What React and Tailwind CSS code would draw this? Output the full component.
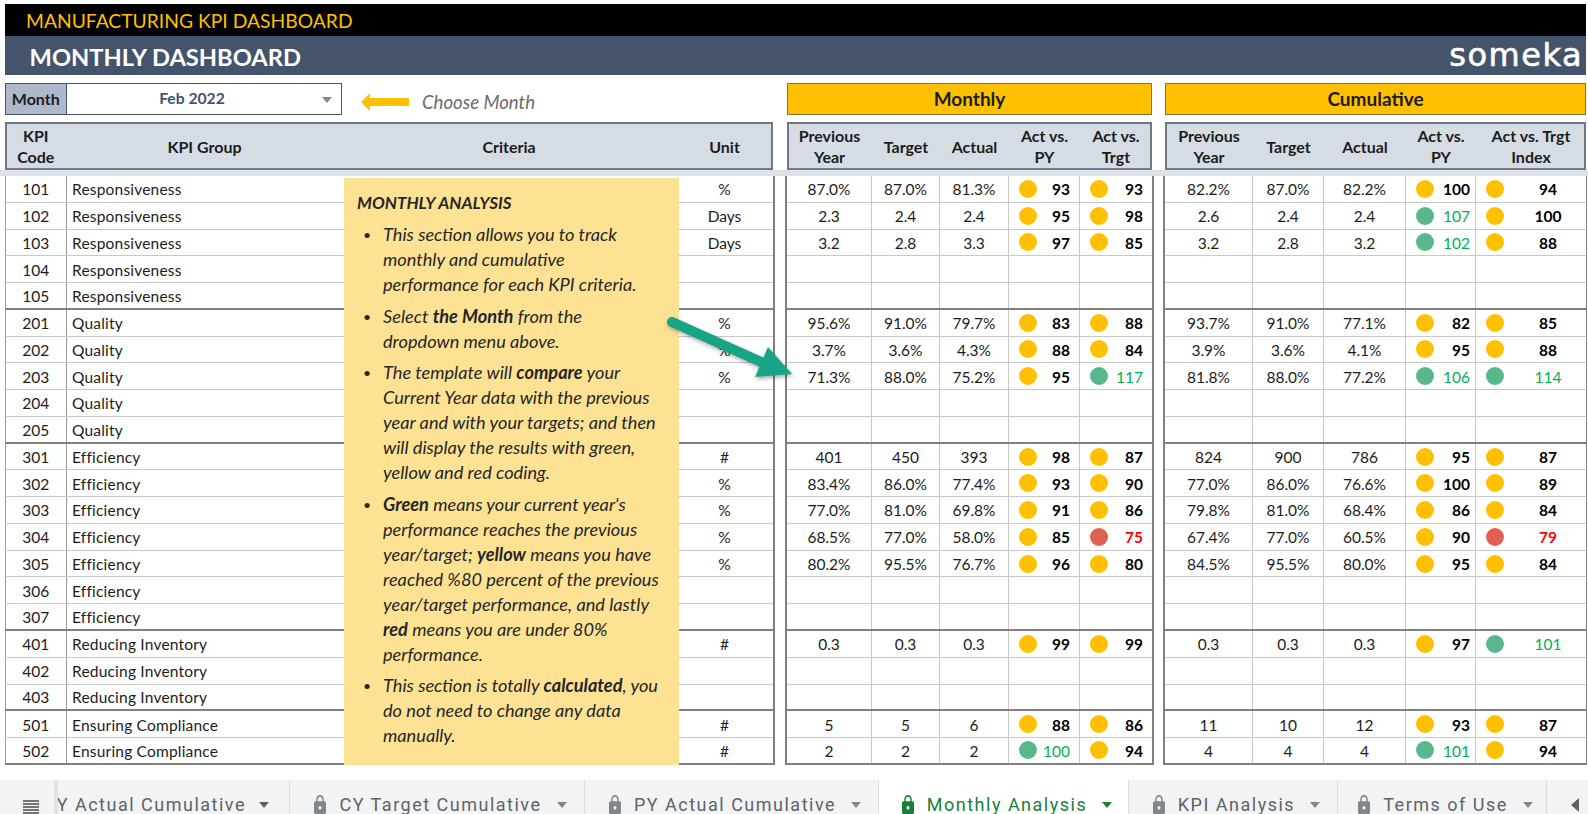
import React from 'react'

const sans = { fontFamily: 'Lato, "Liberation Sans", sans-serif' }

// u = unit, m = monthly [py, target, actual, score, score], c = cumulative; score = dot colour letter + value
const kpiRows = [
  { code: 101, group: 'Responsiveness', u: '%', m: ['87.0%', '87.0%', '81.3%', 'y93', 'y93'], c: ['82.2%', '87.0%', '82.2%', 'y100', 'y94'] },
  { code: 102, group: 'Responsiveness', u: 'Days', m: ['2.3', '2.4', '2.4', 'y95', 'y98'], c: ['2.6', '2.4', '2.4', 'g107', 'y100'] },
  { code: 103, group: 'Responsiveness', u: 'Days', m: ['3.2', '2.8', '3.3', 'y97', 'y85'], c: ['3.2', '2.8', '3.2', 'g102', 'y88'] },
  { code: 104, group: 'Responsiveness' },
  { code: 105, group: 'Responsiveness', end: true },
  { code: 201, group: 'Quality', u: '%', m: ['95.6%', '91.0%', '79.7%', 'y83', 'y88'], c: ['93.7%', '91.0%', '77.1%', 'y82', 'y85'] },
  { code: 202, group: 'Quality', u: '%', m: ['3.7%', '3.6%', '4.3%', 'y88', 'y84'], c: ['3.9%', '3.6%', '4.1%', 'y95', 'y88'] },
  { code: 203, group: 'Quality', u: '%', m: ['71.3%', '88.0%', '75.2%', 'y95', 'g117'], c: ['81.8%', '88.0%', '77.2%', 'g106', 'g114'] },
  { code: 204, group: 'Quality' },
  { code: 205, group: 'Quality', end: true },
  { code: 301, group: 'Efficiency', u: '#', m: ['401', '450', '393', 'y98', 'y87'], c: ['824', '900', '786', 'y95', 'y87'] },
  { code: 302, group: 'Efficiency', u: '%', m: ['83.4%', '86.0%', '77.4%', 'y93', 'y90'], c: ['77.0%', '86.0%', '76.6%', 'y100', 'y89'] },
  { code: 303, group: 'Efficiency', u: '%', m: ['77.0%', '81.0%', '69.8%', 'y91', 'y86'], c: ['79.8%', '81.0%', '68.4%', 'y86', 'y84'] },
  { code: 304, group: 'Efficiency', u: '%', m: ['68.5%', '77.0%', '58.0%', 'y85', 'r75'], c: ['67.4%', '77.0%', '60.5%', 'y90', 'r79'] },
  { code: 305, group: 'Efficiency', u: '%', m: ['80.2%', '95.5%', '76.7%', 'y96', 'y80'], c: ['84.5%', '95.5%', '80.0%', 'y95', 'y84'] },
  { code: 306, group: 'Efficiency' },
  { code: 307, group: 'Efficiency', end: true },
  { code: 401, group: 'Reducing Inventory', u: '#', m: ['0.3', '0.3', '0.3', 'y99', 'y99'], c: ['0.3', '0.3', '0.3', 'y97', 'g101'] },
  { code: 402, group: 'Reducing Inventory' },
  { code: 403, group: 'Reducing Inventory', end: true },
  { code: 501, group: 'Ensuring Compliance', u: '#', m: ['5', '5', '6', 'y88', 'y86'], c: ['11', '10', '12', 'y93', 'y87'] },
  { code: 502, group: 'Ensuring Compliance', u: '#', m: ['2', '2', '2', 'g100', 'y94'], c: ['4', '4', '4', 'g101', 'y94'], end: true },
]

const dotColor = { y: 'bg-[#ffc000]', g: 'bg-[#58b88c]', r: 'bg-[#e2604f]' }
const numColor = {
  y: 'text-black font-bold',
  g: 'text-[#00b050]',
  r: 'text-[#ff0000] font-bold',
}

const monthlyW = ['w-[85px]', 'w-[68px]', 'w-[69px]', 'w-[71px]', 'w-[72px]']
const cumulW = ['w-[88px]', 'w-[71px]', 'w-[82px]', 'w-[70px]', 'w-[110px]']
const monthlyAlign = ['', '', '', 'text-right pr-[9px]', 'text-right pr-[9px]']
const cumulAlign = ['', '', '', 'text-right pr-[5px]', 'text-center pl-[6px]']

const ScoreCell = ({ value, width, last, align }) => (
  <div className={`${width} h-full flex items-center pl-[10px] ${last ? '' : 'border-r border-[#c8c8c8]'}`}>
    {value && <span className={`w-[18px] h-[18px] rounded-full shrink-0 ${dotColor[value[0]]}`} />}
    {value && <span className={`flex-1 pt-[2px] ${align} ${numColor[value[0]]}`}>{value.slice(1)}</span>}
  </div>
)

const Segment = ({ values = [], widths, aligns }) => (
  <div className="flex h-full">
    {widths.map((w, i) =>
      i < 3 ? (
        <div key={i} className={`${w} h-full flex items-center justify-center pt-[2px] border-r border-[#c8c8c8]`}>
          {values[i]}
        </div>
      ) : (
        <ScoreCell key={i} value={values[i]} width={w} last={i === 4} align={aligns[i]} />
      )
    )}
  </div>
)

const Row = ({ row }) => (
  <div className="flex h-[26.77px] text-[15.5px] text-[#1c1c1c]">
    <div className={`flex flex-none w-[768.5px] border-b ${row.end ? 'border-b-2 border-[#808080]' : 'border-[#c8c8c8]'}`}>
      <div className="w-[62.5px] flex items-center justify-center pt-[2px] border-l border-r border-[#9a9a9a]">{row.code}</div>
      <div className="w-[275px] flex items-center pt-[2px] pl-[5px] tracking-[0.2px]">{row.group}</div>
      <div className="w-[334px]" />
      <div className="w-[97px] flex items-center justify-center pt-[2px]">{row.u}</div>
    </div>
    <div className="w-[14px] flex-none border-x-2 border-[#808080]" />
    <div className={`flex-none border-b ${row.end ? 'border-b-2 border-[#808080]' : 'border-[#c8c8c8]'}`}>
      <Segment values={row.m} widths={monthlyW} aligns={monthlyAlign} />
    </div>
    <div className="w-[13px] flex-none border-x-2 border-[#808080]" />
    <div className={`flex-none border-b border-r border-r-[#808080] ${row.end ? 'border-b-2 border-b-[#808080]' : 'border-b-[#c8c8c8]'}`}>
      <Segment values={row.c} widths={cumulW} aligns={cumulAlign} />
    </div>
  </div>
)

const HeadCell = ({ width, children }) => (
  <div className={`${width} flex items-center justify-center text-center leading-[21px]`}>{children}</div>
)

const Bullet = ({ children, className = '' }) => (
  <div className={`flex ${className}`}>
    <span className="w-[26px] pl-[6px] not-italic text-[14px]">•</span>
    <p>{children}</p>
  </div>
)

const LockIcon = ({ className }) => (
  <svg viewBox="0 0 24 24" className={className} fill="currentColor" preserveAspectRatio="none">
    <path d="M18 8h-1V6c0-2.76-2.24-5-5-5S7 3.24 7 6v2H6c-1.1 0-2 .9-2 2v10c0 1.1.9 2 2 2h12c1.1 0 2-.9 2-2V10c0-1.1-.9-2-2-2zm-6 9c-1.1 0-2-.9-2-2s.9-2 2-2 2 .9 2 2-.9 2-2 2zm3.1-9H8.9V6c0-1.71 1.39-3.1 3.1-3.1 1.71 0 3.1 1.39 3.1 3.1v2z" />
  </svg>
)

const Caret = ({ className = 'text-[#80868b]' }) => (
  <svg viewBox="0 0 10 6" className={`w-[10px] h-[6px] ${className}`} fill="currentColor">
    <path d="M0 0h10L5 6z" />
  </svg>
)

const Tab = ({ label, width, active }) => (
  <div
    className={`${width} flex-none flex items-center justify-center gap-[10px] pt-[16px] pl-[4px] border-r border-[#dadce0] ${
      active ? 'bg-white text-[#188038]' : 'text-[#5f6368]'
    }`}
  >
    <LockIcon className={`w-[18px] h-[22px] flex-none ${active ? 'text-[#188038]' : 'text-[#80868b]'}`} />
    <span className="tracking-[1.5px] whitespace-nowrap">{label}</span>
    <Caret className={`ml-[5px] flex-none ${active ? 'text-[#188038]' : 'text-[#80868b]'}`} />
  </div>
)

export default function App() {
  return (
    <div className="relative w-[1588px] h-[814px] overflow-hidden bg-white pt-[3.5px]" style={sans}>
      {/* Title bars */}
      <div className="ml-[4.5px] mr-[2px] h-[32.5px] bg-black flex items-center pl-[21.5px] pt-[3px] text-[#ffc000] text-[19.3px]">
        MANUFACTURING KPI DASHBOARD
      </div>
      <div className="ml-[4.5px] mr-[2px] h-[39px] bg-[#44546a] flex items-center justify-between pl-[25px] pr-[3px] text-white">
        <span className="font-bold text-[23.7px] pt-[5px]">MONTHLY DASHBOARD</span>
        <span
          className="text-[32px] tracking-[1.5px] leading-none pb-[2px] [-webkit-text-stroke:0.6px_white]"
          style={{ fontFamily: '"DejaVu Sans", sans-serif' }}
        >
          someka
        </span>
      </div>

      {/* Month selector and section titles */}
      <div className="flex h-[32px] mt-[8px] ml-[4.5px]">
        <div className="w-[62.5px] flex items-center justify-center bg-[#adb9ca] border border-[#44546a] font-bold text-[16px] text-[#1c1c1c]">
          Month
        </div>
        <div className="w-[275px] flex items-center justify-center relative bg-white border border-l-0 border-[#44546a] font-bold text-[15.7px] text-[#44546a]">
          <span className="pr-[24px]">Feb 2022</span>
          <Caret className="absolute right-[9px] top-[13px] text-[#8a8a8a]" />
        </div>
        <svg viewBox="0 0 48 18" className="w-[48px] h-[18px] mt-[10px] ml-[19px]">
          <path d="M0 9L9 0v5h39v8H9v5z" fill="#ffc000" />
        </svg>
        <span className="ml-[13px] w-[365px] text-[#6b6b6b] italic text-[18.6px] leading-[39px]">Choose Month</span>
        <div className="w-[365px] flex items-center justify-center bg-[#ffc000] border border-[#7f7140] font-bold text-[19px] text-[#1c1c1c]">
          Monthly
        </div>
        <div className="w-[13px]" />
        <div className="w-[421px] flex items-center justify-center bg-[#ffc000] border border-[#7f7140] font-bold text-[19px] text-[#1c1c1c]">
          Cumulative
        </div>
      </div>

      {/* Column headers */}
      <div className="flex h-[48px] mt-[7px] ml-[4.5px] font-bold text-[16px] text-[#1c1c1c]">
        <div className="flex flex-none w-[768.5px] bg-[#d6dce4] ring-2 ring-inset ring-[#6f7886]">
          <HeadCell width="w-[62.5px]">KPI<br />Code</HeadCell>
          <HeadCell width="w-[275px]">KPI Group</HeadCell>
          <HeadCell width="w-[334px]">Criteria</HeadCell>
          <HeadCell width="w-[97px]">Unit</HeadCell>
        </div>
        <div className="w-[14px] flex-none" />
        <div className="flex flex-none bg-[#d6dce4] ring-2 ring-inset ring-[#6f7886]">
          <HeadCell width={monthlyW[0]}>Previous<br />Year</HeadCell>
          <HeadCell width={monthlyW[1]}>Target</HeadCell>
          <HeadCell width={monthlyW[2]}>Actual</HeadCell>
          <HeadCell width={monthlyW[3]}>Act vs.<br />PY</HeadCell>
          <HeadCell width={monthlyW[4]}>Act vs.<br />Trgt</HeadCell>
        </div>
        <div className="w-[13px] flex-none" />
        <div className="flex flex-none bg-[#d6dce4] ring-2 ring-inset ring-[#6f7886]">
          <HeadCell width={cumulW[0]}>Previous<br />Year</HeadCell>
          <HeadCell width={cumulW[1]}>Target</HeadCell>
          <HeadCell width={cumulW[2]}>Actual</HeadCell>
          <HeadCell width={cumulW[3]}>Act vs.<br />PY</HeadCell>
          <HeadCell width={cumulW[4]}>Act vs. Trgt<br />Index</HeadCell>
        </div>
      </div>
      <div className="h-[6px] bg-[#dde2e9]" />

      {/* Table body */}
      <div className="relative ml-[4.5px] h-[589px]">
        {kpiRows.map((row) => (
          <Row key={row.code} row={row} />
        ))}

        {/* Note over the criteria column */}
        <div className="absolute left-[339.5px] top-[2px] bottom-0 w-[334.5px] bg-[#fee294] pl-[13px] pt-[12px] text-[18.2px] leading-[25px] italic text-[#262626]">
          <p className="font-bold text-[17px] mb-[7px]">MONTHLY ANALYSIS</p>
          <Bullet>
            This section allows you to track<br />monthly and cumulative<br />performance for each KPI criteria.
          </Bullet>
          <Bullet className="mt-[6.500px]">
            Select <b>the Month</b> from the<br />dropdown menu above.
          </Bullet>
          <Bullet className="mt-[6.500px]">
            The template will <b>compare</b> your<br />Current Year data with the previous<br />year and with your targets; and then<br />will display the results with green,<br />yellow and red coding.
          </Bullet>
          <Bullet className="mt-[6.500px]">
            <span>
              <b>Green</b> means your current year's<br />performance reaches the previous<br />year/target; <b>yellow</b> means you have<br />reached %80 percent of the previous<br />year/target performance, and lastly<br /><b>red</b> means you are under 80%<br />performance.
            </span>
          </Bullet>
          <Bullet className="mt-[6px]">
            This section is totally <b>calculated</b>, you<br />do not need to change any data<br />manually.
          </Bullet>
        </div>
      </div>

      {/* Teal pointer arrow */}
      <svg className="absolute left-[660px] top-[310px] w-[140px] h-[75px] drop-shadow-[1px_2px_2px_rgba(0,0,0,0.35)]" viewBox="0 0 140 75">
        <path d="M12 12L108 55" stroke="#17a585" strokeWidth="10" strokeLinecap="round" fill="none" />
        <path d="M108 37L132 64L95 67z" fill="#17a585" />
      </svg>

      {/* Sheet tabs */}
      <div className="flex h-[34px] mt-[15px] bg-[#f1f3f4] text-[18px] leading-none" style={{ fontFamily: 'Roboto, sans-serif' }}>
        <div className="w-[58px] flex-none flex items-center justify-center pt-[19px] pl-[7px] border-r-4 border-[#e0e2e4]">
          <svg viewBox="0 0 16 14" className="w-[16px] h-[14px] text-[#757575]" fill="currentColor">
            <path d="M0 0h16v2H0zM0 3h16v2H0zM0 6h16v2H0zM0 9h16v2H0zM0 12h16v2H0z" />
          </svg>
        </div>
        <div className="w-[232px] flex-none flex items-center justify-end gap-[8px] pt-[16px] pr-[20px] overflow-hidden border-r border-[#dadce0] text-[#5f6368]">
          <span className="tracking-[1.5px] whitespace-nowrap">CY Actual Cumulative</span>
          <Caret className="ml-[5px] flex-none" />
        </div>
        <Tab label="CY Target Cumulative" width="w-[295px]" />
        <Tab label="PY Actual Cumulative" width="w-[294px]" />
        <Tab label="Monthly Analysis" width="w-[250px]" active />
        <Tab label="KPI Analysis" width="w-[209px]" />
        <Tab label="Terms of Use" width="w-[209px]" />
        <div className="flex-1 flex items-center justify-center pt-[16px] pl-[14px] text-[#5f6368]">
          <svg viewBox="0 0 8 14" className="w-[8px] h-[14px]" fill="currentColor">
            <path d="M8 0v14L0 7z" />
          </svg>
        </div>
      </div>
    </div>
  )
}
